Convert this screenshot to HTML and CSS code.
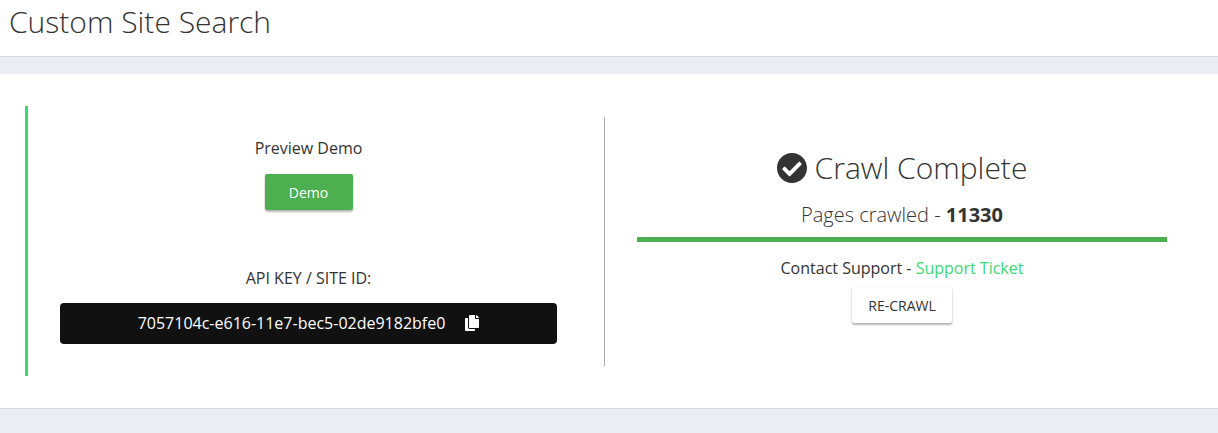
FILE: index.html
```html
<!DOCTYPE html>
<html lang="en">
<head>
<meta charset="utf-8">
<title>Custom Site Search</title>
<link rel="stylesheet" href="styles.css">
</head>
<body>
<header class="page-header"><h1>Custom Site Search</h1></header>
<main class="card">
  <section class="left">
    <p class="label">Preview Demo</p>
    <a class="btn btn-green">Demo</a>
    <p class="label api-label">API KEY / SITE ID:</p>
    <div class="key">
      <span>7057104c-e616-11e7-bec5-02de9182bfe0</span>
      <svg class="copy" viewBox="0 0 448 512" width="14" height="16" aria-hidden="true"><path fill="#fff" d="M320 448v40c0 13.255-10.745 24-24 24H24c-13.255 0-24-10.745-24-24V120c0-13.255 10.745-24 24-24h72v296c0 30.879 25.121 56 56 56h168zm0-344V0H152c-13.255 0-24 10.745-24 24v368c0 13.255 10.745 24 24 24h272c13.255 0 24-10.745 24-24V128H344c-13.2 0-24-10.8-24-24zm120.971-31.029L375.029 7.029A24 24 0 0 0 358.059 0H352v96h96v-6.059a24 24 0 0 0-7.029-16.97z"/></svg>
    </div>
  </section>
  <section class="right">
    <h2 class="status">
      <svg class="check" viewBox="8 8 496 496" width="30" height="30" aria-hidden="true"><path fill="#333" d="M504 256c0 136.967-111.033 248-248 248S8 392.967 8 256 119.033 8 256 8s248 111.033 248 248zM227.314 387.314l184-184c6.248-6.248 6.248-16.379 0-22.627l-22.627-22.627c-6.248-6.249-16.379-6.249-22.628 0L216 308.118l-70.059-70.059c-6.248-6.248-16.379-6.248-22.628 0l-22.627 22.627c-6.248 6.248-6.248 16.379 0 22.627l104 104c6.249 6.25 16.379 6.25 22.628.001z"/></svg>
      Crawl Complete
    </h2>
    <p class="pages">Pages crawled - <b>11330</b></p>
    <div class="bar"></div>
    <p class="contact">Contact Support - <a class="link">Support Ticket</a></p>
    <a class="btn btn-white">RE-CRAWL</a>
  </section>
</main>
</body>
</html>
```
FILE: styles.css
```css
* { box-sizing: border-box; }
html, body { margin: 0; height: 433px; overflow: hidden; }
body { background: #e9edf4; font-family: "Open Sans", sans-serif; color: #333; }
.page-header { height: 57px; background: #fff; border-bottom: 1px solid #d9d9dd; padding-left: 9px; }
.page-header h1 { margin: 0; font-size: 30px; font-weight: 300; line-height: 44px; }
.card { margin-top: 17px; height: 335px; background: #fff; border-bottom: 1px solid #d9d9dd; display: flex; align-items: flex-start; padding: 32px 19px 0 25px; }
.left { width: 564px; height: 270px; border-left: 3px solid #3cd876; padding: 0 32px; display: flex; flex-direction: column; align-items: center; }
.label { margin: 0; font-size: 16px; line-height: 22px; }
.left > .label:first-child { margin-top: 31px; }
.api-label { margin-top: 57px; }
.btn { display: flex; align-items: center; justify-content: center; width: 88px; height: 36px; border-radius: 2px; font-size: 14px; box-shadow: 0 2px 2px rgba(0,0,0,.28), 0 0 2px rgba(0,0,0,.1); }
.btn-green { margin-top: 15px; background: #4caf50; color: #fff; }
.btn-white { margin-top: 8px; width: 100px; background: #fff; color: #333; }
.key { margin-top: 14px; width: 497px; height: 41px; padding-bottom: 2px; background: #111; border-radius: 4px; color: #fff; font-size: 16px; display: flex; align-items: center; justify-content: center; gap: 20px; }
.copy { flex: none; }
.right { margin: 11px 0 0 15px; flex: 1; height: 249px; border-left: 1px solid #a8a8a8; padding: 0 32px; display: flex; flex-direction: column; align-items: center; }
.status { margin: 31px 0 0; font-size: 30px; font-weight: 300; line-height: 40px; display: flex; align-items: center; gap: 8px; }
.check { flex: none; }
.pages { margin: 13px 0 0; font-size: 20px; font-weight: 300; line-height: 27px; }
.pages b { font-weight: 700; }
.bar { margin-top: 9px; width: 100%; height: 5px; background: #4caf50; flex: none; }
.contact { margin: 15px 0 0; font-size: 16px; line-height: 22px; }
.link { color: #3cd876; }
```
